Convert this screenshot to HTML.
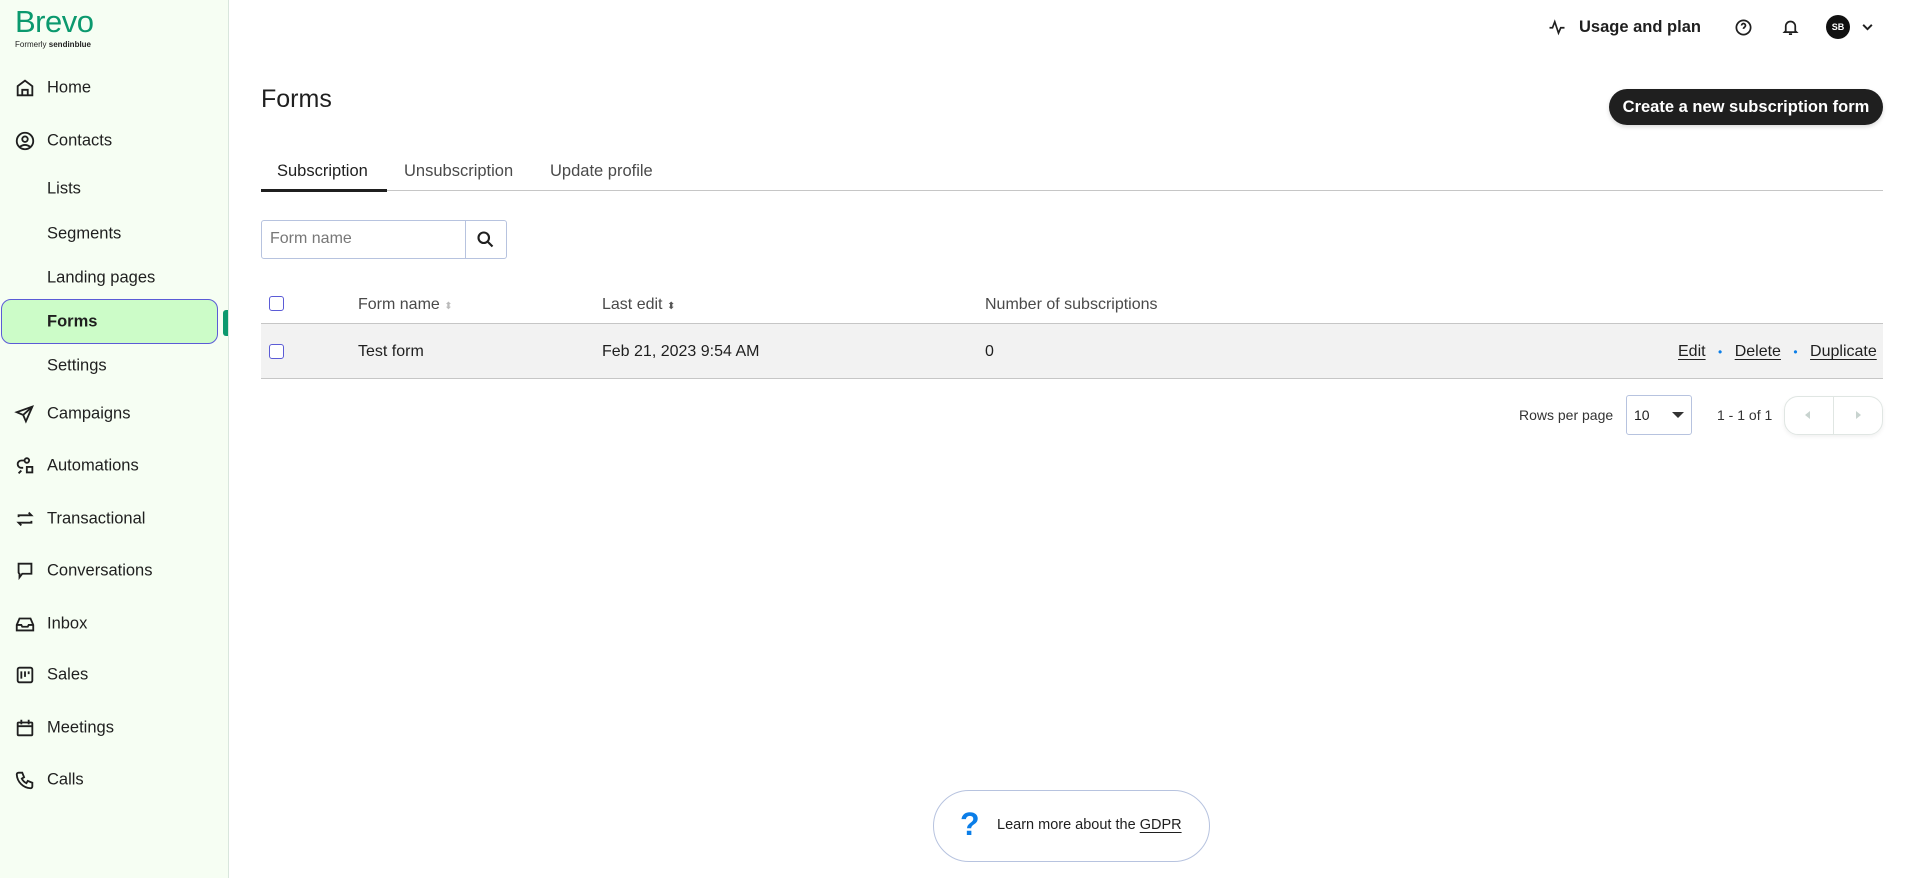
<!DOCTYPE html>
<html><head><meta charset="utf-8"><style>
*{box-sizing:border-box;margin:0;padding:0}
body{width:1908px;height:878px;overflow:hidden;background:#fff;font-family:"Liberation Sans",sans-serif;color:#1f1f1f;position:relative}
.side{position:absolute;left:0;top:0;width:229px;height:878px;background:#f6fef3;border-right:1px solid #d9e6dd}
.logo{position:absolute;left:15px;top:4px;color:#0b996e;font-size:31px;letter-spacing:-0.5px}
.logo small{position:absolute;left:0;top:36px;font-size:8px;color:#222;letter-spacing:0;white-space:nowrap}
.nav{position:absolute;left:47px;font-size:16.5px;color:#1f1f1f;transform:translateY(-50%)}
.ico{position:absolute;left:14px;width:22px;height:22px;transform:translateY(-50%)}
.sel{position:absolute;left:1px;top:299px;width:217px;height:45px;background:#ccfcc8;border:1.5px solid #5b5bd6;border-radius:10px}
.ind{position:absolute;left:223px;top:310px;width:5px;height:26px;background:#0b996e;border-radius:3px 0 0 3px}
.abs{position:absolute}
.cb{position:absolute;width:15px;height:15px;border:1.5px solid #5b5bd6;border-radius:3px;background:#fff}
.th{position:absolute;top:305px;transform:translateY(-50%);font-size:16px;color:#4a4a4a}
.td{position:absolute;top:353px;transform:translateY(-50%);font-size:16px;color:#1f1f1f}
u{text-underline-offset:3px}
</style></head><body>
<div class="side">
<div class="logo">Brevo<small>Formerly <b>sendinblue</b></small></div>
<div class="sel"></div><div class="ind"></div>
<svg class="ico" style="top:88px" viewBox="0 0 24 24" fill="none" stroke="#1f1f1f" stroke-width="2"><path d="M4 10l8-6 8 6v10H4z"/><path d="M9 20v-6h6v6"/></svg>
<div class="nav" style="top:88px">Home</div>
<svg class="ico" style="top:141px" viewBox="0 0 24 24" fill="none" stroke="#1f1f1f" stroke-width="2"><circle cx="12" cy="12" r="9"/><circle cx="12" cy="10" r="3"/><path d="M6.5 18.5c3-3 8-3 11 0"/></svg>
<div class="nav" style="top:141px">Contacts</div>
<div class="nav" style="top:189px">Lists</div>
<div class="nav" style="top:234px">Segments</div>
<div class="nav" style="top:278px">Landing pages</div>
<div class="nav" style="top:322px;font-weight:bold">Forms</div>
<div class="nav" style="top:366px">Settings</div>
<svg class="ico" style="top:414px" viewBox="0 0 24 24" fill="none" stroke="#1f1f1f" stroke-width="2"><path d="M20 4L3 10l7 3 3 7z"/><path d="M10 13l10-9"/></svg>
<div class="nav" style="top:414px">Campaigns</div>
<svg class="ico" style="top:466px" viewBox="0 0 24 24" fill="none" stroke="#1f1f1f" stroke-width="2"><circle cx="14" cy="6" r="2.5"/><rect x="14" y="13" width="6" height="6"/><path d="M11 6H8a4 4 0 000 8h2M8 17l-3 3"/></svg>
<div class="nav" style="top:466px">Automations</div>
<svg class="ico" style="top:519px" viewBox="0 0 24 24" fill="none" stroke="#1f1f1f" stroke-width="2"><path d="M5 10V8h14l-3-3M19 14v2H5l3 3"/></svg>
<div class="nav" style="top:519px">Transactional</div>
<svg class="ico" style="top:571px" viewBox="0 0 24 24" fill="none" stroke="#1f1f1f" stroke-width="2"><path d="M5 4h14v11H9l-3 4v-4a2 2 0 01-1-2z"/><path d="M9 10h.01M12 10h.01M15 10h.01"/></svg>
<div class="nav" style="top:571px">Conversations</div>
<svg class="ico" style="top:624px" viewBox="0 0 24 24" fill="none" stroke="#1f1f1f" stroke-width="2"><path d="M3 13l3-7h12l3 7v6H3z"/><path d="M3 13h5l1 2h6l1-2h5"/></svg>
<div class="nav" style="top:624px">Inbox</div>
<svg class="ico" style="top:675px" viewBox="0 0 24 24" fill="none" stroke="#1f1f1f" stroke-width="2"><rect x="4" y="4" width="16" height="16" rx="2"/><path d="M8 8v8M12 8v6M16 8v3"/></svg>
<div class="nav" style="top:675px">Sales</div>
<svg class="ico" style="top:728px" viewBox="0 0 24 24" fill="none" stroke="#1f1f1f" stroke-width="2"><rect x="4" y="6" width="16" height="14" rx="1"/><path d="M4 10h16M8 3v5M16 3v5"/></svg>
<div class="nav" style="top:728px">Meetings</div>
<svg class="ico" style="top:780px" viewBox="0 0 24 24" fill="none" stroke="#1f1f1f" stroke-width="2"><path d="M5 4h4l2 5-2.5 1.5a11 11 0 005 5L15 13l5 2v4a2 2 0 01-2 2A16 16 0 013 6a2 2 0 012-2z"/></svg>
<div class="nav" style="top:780px">Calls</div>
</div>

<!-- top bar -->
<svg class="abs" style="left:1548px;top:18px" width="18" height="18" viewBox="0 0 24 24" fill="none" stroke="#1f1f1f" stroke-width="2.2"><path d="M2 13h4l3-8 5 15 3-7h5"/></svg>
<div class="abs" style="left:1579px;top:18px;font-size:16.5px;font-weight:bold">Usage and plan</div>
<svg class="abs" style="left:1734px;top:18px" width="19" height="19" viewBox="0 0 24 24" fill="none" stroke="#1f1f1f" stroke-width="2.2"><circle cx="12" cy="12" r="9"/><path d="M9.5 9.5a2.5 2.5 0 114 2c-1 .6-1.5 1.2-1.5 2.2M12 17h.01"/></svg>
<svg class="abs" style="left:1781px;top:17px" width="19" height="20" viewBox="0 0 24 24" fill="none" stroke="#1f1f1f" stroke-width="2.2"><path d="M6 17V11a6 6 0 0112 0v6l1.5 1.5h-15zM10 21h4"/></svg>
<div class="abs" style="left:1826px;top:15px;width:24px;height:24px;border-radius:50%;background:#111;color:#fff;font-size:9px;font-weight:bold;text-align:center;line-height:24px">SB</div>
<svg class="abs" style="left:1861px;top:22px" width="13" height="10" viewBox="0 0 12 8" fill="none" stroke="#1f1f1f" stroke-width="1.8"><path d="M2 2l4 4 4-4"/></svg>

<div class="abs" style="left:261px;top:85px;font-size:25px">Forms</div>
<div class="abs" style="left:1609px;top:89px;width:274px;height:36px;border-radius:18px;background:#1f1f1f;color:#fff;font-weight:bold;font-size:16.5px;text-align:center;line-height:36px;box-shadow:0 2px 4px rgba(0,0,0,.15)">Create a new subscription form</div>

<!-- tabs -->
<div class="abs" style="left:261px;top:190px;width:1622px;height:1px;background:#c6c6c6"></div>
<div class="abs" style="left:261px;top:189px;width:126px;height:3px;background:#1f1f1f"></div>
<div class="abs" style="left:277px;top:162px;font-size:16.5px;color:#1f1f1f">Subscription</div>
<div class="abs" style="left:404px;top:162px;font-size:16.5px;color:#4a4a4a">Unsubscription</div>
<div class="abs" style="left:550px;top:162px;font-size:16.5px;color:#4a4a4a">Update profile</div>

<!-- search -->
<div class="abs" style="left:261px;top:220px;width:246px;height:39px;border:1px solid #b7c3df;border-radius:3px"></div>
<div class="abs" style="left:465px;top:220px;width:1px;height:39px;background:#b7c3df"></div>
<div class="abs" style="left:270px;top:230px;font-size:16px;color:#777">Form name</div>
<svg class="abs" style="left:475px;top:229px" width="21" height="21" viewBox="0 0 24 24" fill="none" stroke="#1f1f1f" stroke-width="2.4"><circle cx="10" cy="10" r="6"/><path d="M15 15l5 5"/></svg>

<!-- table -->
<div class="cb" style="left:269px;top:296px"></div>
<div class="th" style="left:358px">Form name <span style="font-size:10px;color:#bbb">⬍</span></div>
<div class="th" style="left:602px">Last edit <span style="font-size:10px;color:#555">⬍</span></div>
<div class="th" style="left:985px">Number of subscriptions</div>
<div class="abs" style="left:261px;top:323px;width:1622px;height:56px;background:#f2f2f2;border-top:1px solid #c6c6c6;border-bottom:1px solid #c6c6c6"></div>
<div class="cb" style="left:269px;top:344px"></div>
<div class="td" style="left:358px;top:352px">Test form</div>
<div class="td" style="left:602px;top:352px">Feb 21, 2023 9:54 AM</div>
<div class="td" style="left:985px;top:352px">0</div>
<div class="td" style="left:1678px;top:352px"><u>Edit</u> <span style="color:#0b7ee8;margin:0 8px;font-size:12px">•</span> <u>Delete</u> <span style="color:#0b7ee8;margin:0 8px;font-size:12px">•</span> <u>Duplicate</u></div>

<!-- pagination -->
<div class="abs" style="left:1519px;top:407px;font-size:14px;color:#333">Rows per page</div>
<div class="abs" style="left:1626px;top:395px;width:66px;height:40px;border:1px solid #b7c3df;border-radius:3px"></div>
<div class="abs" style="left:1634px;top:407px;font-size:14px">10</div>
<div class="abs" style="left:1672px;top:412px;border-left:6px solid transparent;border-right:6px solid transparent;border-top:6px solid #333"></div>
<div class="abs" style="left:1717px;top:407px;font-size:14px;color:#333">1 - 1 of 1</div>
<div class="abs" style="left:1784px;top:396px;width:99px;height:39px;border:1px solid #e0e6e3;border-radius:14px;box-shadow:0 2px 4px rgba(0,0,0,.06)"></div>
<div class="abs" style="left:1833px;top:397px;width:1px;height:38px;background:#e0e6e3"></div>
<div class="abs" style="left:1805px;top:411px;border-top:4px solid transparent;border-bottom:4px solid transparent;border-right:5px solid #c8d3cf"></div>
<div class="abs" style="left:1856px;top:411px;border-top:4px solid transparent;border-bottom:4px solid transparent;border-left:5px solid #c8d3cf"></div>

<!-- GDPR -->
<div class="abs" style="left:933px;top:790px;width:277px;height:72px;border:1px solid #b7c3df;border-radius:36px"></div>
<div class="abs" style="left:960px;top:806px;font-size:32px;font-weight:bold;color:#0b7ee8">?</div>
<div class="abs" style="left:997px;top:817px;font-size:14.5px;color:#1f1f1f">Learn more about the <u>GDPR</u></div>
</body></html>
